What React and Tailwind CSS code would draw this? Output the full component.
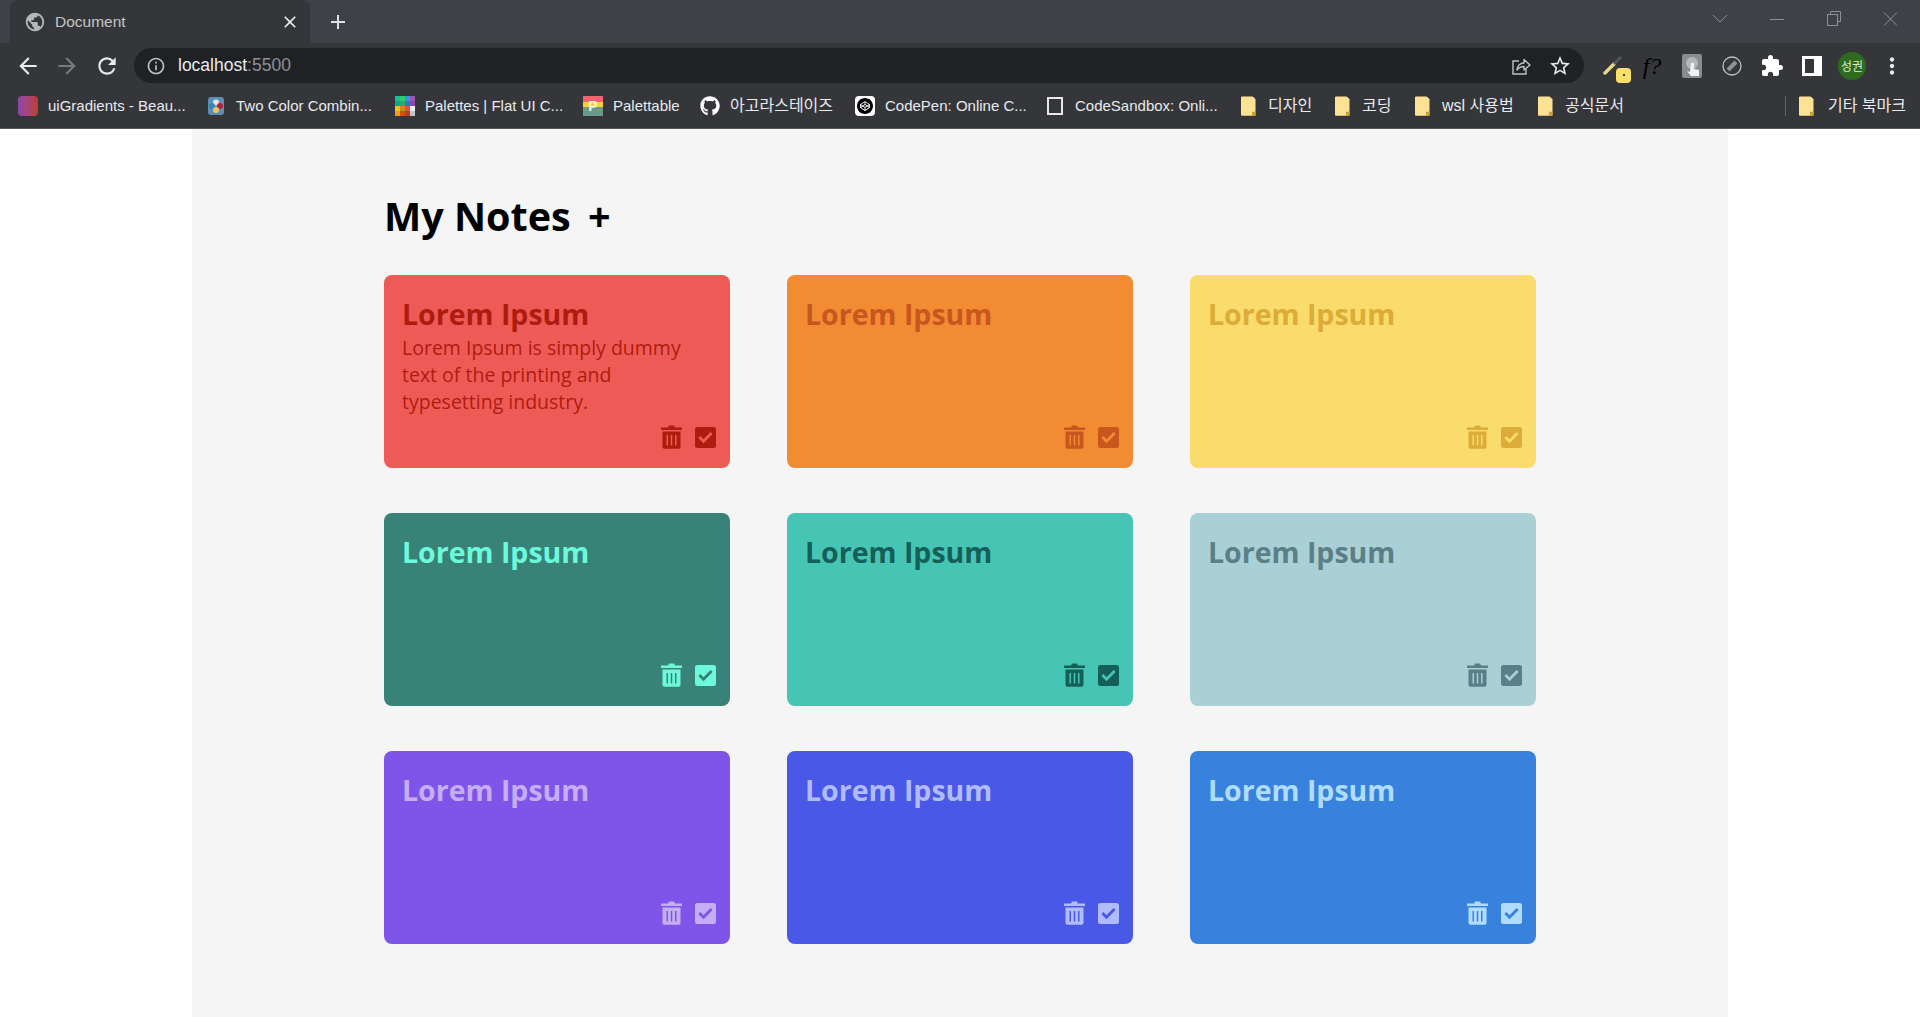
import React from 'react';
import { MdPublic, MdClose, MdAdd, MdArrowBack, MdArrowForward, MdRefresh, MdInfoOutline, MdStarBorder, MdExtension, MdMoreVert } from 'react-icons/md';
import { FaGithub } from 'react-icons/fa';
import { SiCodepen } from 'react-icons/si';

const notes = [
  { bg: 'bg-[#ee5b57]', fg: 'text-[#ae1c10]', body: true },
  { bg: 'bg-[#f28c33]', fg: 'text-[#c8561f]' },
  { bg: 'bg-[#f9dc6b]', fg: 'text-[#dcab38]' },
  { bg: 'bg-[#398277]', fg: 'text-[#6cf9dc]' },
  { bg: 'bg-[#46c5b5]', fg: 'text-[#155f59]' },
  { bg: 'bg-[#a9d0d5]', fg: 'text-[#5a7f86]' },
  { bg: 'bg-[#7e55e8]', fg: 'text-[#c5aef5]' },
  { bg: 'bg-[#4958e6]', fg: 'text-[#b1bcff]' },
  { bg: 'bg-[#3882dd]', fg: 'text-[#b0dcff]' },
];

const bookmarks = [
  { label: 'uiGradients - Beau...', w: 'w-[188px]', icon: <span className="w-5 h-5 rounded-sm bg-gradient-to-r from-[#8e44ad] to-[#c0392b]" /> },
  { label: 'Two Color Combin...', w: 'w-[189px]', icon: <TwoColorIcon /> },
  { label: 'Palettes | Flat UI C...', w: 'w-[188px]', icon: <PalettesIcon /> },
  { label: 'Palettable', w: 'w-[117px]', icon: <PalettableIcon /> },
  { label: '아고라스테이즈', w: 'w-[155px]', kr: true, icon: <FaGithub size={20} className="text-white" /> },
  { label: 'CodePen: Online C...', w: 'w-[190px]', icon: <span className="w-5 h-5 rounded-sm bg-white flex items-center justify-center"><SiCodepen size={16} className="text-black" /></span> },
  { label: 'CodeSandbox: Onli...', w: 'w-[193px]', icon: <span className="w-5 h-5 flex items-center justify-center"><span className="w-4 h-[18px] border-2 border-[#e8e8e8]" /></span> },
  { label: '디자인', w: 'w-[94px]', kr: true, folder: true },
  { label: '코딩', w: 'w-[80px]', kr: true, folder: true },
  { label: 'wsl 사용법', w: 'w-[123px]', kr: true, folder: true },
  { label: '공식문서', w: 'w-[100px]', kr: true, folder: true },
];

function TwoColorIcon() {
  return (
    <svg width="20" height="20" viewBox="0 0 20 20">
      <rect x="2" y="1" width="16" height="18" rx="3" fill="#5b8fb8" />
      <circle cx="10" cy="6.500" r="3" fill="#dfe6ea" />
      <circle cx="14" cy="10" r="3" fill="#b3223a" />
      <circle cx="6" cy="10" r="3" fill="#3a86a8" />
      <circle cx="10" cy="14" r="3" fill="#e8c766" />
    </svg>
  );
}

// flat ui palette, 4 by 4
const flatColors = [
  'bg-[#1abc9c]', 'bg-[#2ecc71]', 'bg-[#3498db]', 'bg-[#9b59b6]',
  'bg-[#16a085]', 'bg-[#27ae60]', 'bg-[#2980b9]', 'bg-[#8e44ad]',
  'bg-[#f1c40f]', 'bg-[#e67e22]', 'bg-[#e74c3c]', 'bg-[#ecf0f1]',
  'bg-[#f39c12]', 'bg-[#d35400]', 'bg-[#c0392b]', 'bg-[#bdc3c7]',
];

function PalettesIcon() {
  return (
    <span className="w-5 h-5 grid grid-cols-4 grid-rows-4">
      {flatColors.map((c) => <i key={c} className={c} />)}
    </span>
  );
}

function PalettableIcon() {
  return (
    <span className="relative w-5 h-5 flex flex-col">
      <i className="h-[6px] bg-[#f2646f]" />
      <i className="h-[5px] bg-[#f6d32d]" />
      <i className="h-[9px] bg-[#6a9a8a]" />
      <span className="absolute inset-0 flex items-center justify-center text-[14px] font-bold text-[#f4f1dc]">P</span>
    </span>
  );
}

function Folder() {
  return (
    <span className="w-5 h-5 flex items-center justify-center shrink-0">
      <svg width="15" height="20" viewBox="0 0 15 20">
        <path d="M0 1.500A1 1 0 0 1 1 .5h10.500L14.500 3v16a.8.8 0 0 1-.8.8H1a1 1 0 0 1-1-1z" fill="#fde293" />
        <path d="M11 19.800v-4h3.500v3.200a.8.8 0 0 1-.8.8z" fill="#c9a02c" />
      </svg>
    </span>
  );
}

function ShareIcon() {
  return (
    <svg width="20" height="20" viewBox="0 0 20 20" fill="none" stroke="#bdc1c6" strokeWidth="1.400">
      <path d="M8 5H2v13h13v-5" />
      <path d="M6 14c0-4 3-7 7-7V3.500L19 9l-6 5v-3.500c-3 0-5 1-7 3.500z" strokeLinejoin="round" />
    </svg>
  );
}

function WandIcon() {
  return (
    <span className="relative w-[40px] h-[30px] flex items-center justify-center">
      <svg width="22" height="22" viewBox="0 0 22 22" className="absolute left-[11px] top-[2px]">
        <path d="M2 20 L11 11" stroke="#e8d58a" strokeWidth="3.500" strokeLinecap="round" />
        <path d="M11 11 L18 4" stroke="#55585c" strokeWidth="2.500" />
      </svg>
      <span className="absolute left-[24px] top-[17px] w-[15px] h-[15px] rounded-sm bg-[#fde068] flex items-center justify-center">
        <span className="w-[2px] h-[2px] bg-[#333]" />
      </span>
    </span>
  );
}

function TileIcon() {
  return (
    <svg width="20" height="24" viewBox="0 0 20 24">
      <rect width="20" height="24" rx="2" fill="#8a8c8e" />
      <circle cx="10" cy="9" r="6" fill="#b5b7b9" />
      <path d="M9 9h3v6l5 1v6H9l-4-5 3 1z" fill="#f1f2f3" />
    </svg>
  );
}

function CompassIcon() {
  return (
    <svg width="20" height="20" viewBox="0 0 20 20">
      <circle cx="10" cy="10" r="9" fill="none" stroke="#bdc1c6" strokeWidth="1.300" />
      <path d="M6 14 L14 6" stroke="#8f9296" strokeWidth="4" />
    </svg>
  );
}

function RestoreIcon() {
  return (
    <svg width="14" height="15" viewBox="0 0 14 15" fill="none" stroke="#8d9094">
      <path d="M3.500 3.500V.5h10v10h-3" />
      <rect x=".5" y="3.500" width="10" height="11" />
    </svg>
  );
}

function TrashIcon() {
  return (
    <svg width="21" height="24" viewBox="0 0 21 24" fill="currentColor" className="block">
      <path d="M0 2.500h7L8 .5h5l1 2h7v2.500H0z" />
      <path fillRule="evenodd" d="M1.500 6.500h18V22a1.800 1.800 0 0 1-1.800 1.800H3.300A1.800 1.800 0 0 1 1.500 22zM5.500 10v10.500h1.500V10zM9.750 10v10.500h1.500V10zM14 10v10.500h1.500V10z" />
    </svg>
  );
}

function CheckIcon() {
  return (
    <svg width="21" height="21" viewBox="0 0 21 21" fill="currentColor" className="block">
      <path fillRule="evenodd" d="M2.500 0h16A2.500 2.500 0 0 1 21 2.500v16a2.500 2.500 0 0 1-2.500 2.500h-16A2.500 2.500 0 0 1 0 18.500v-16A2.500 2.500 0 0 1 2.500 0zm6 16.200L17.600 7.100l-2-2-7.100 7.100-3.100-3.100-2 2z" />
    </svg>
  );
}

function Note({ note }) {
  return (
    <div className={`${note.bg} ${note.fg} rounded-lg h-[193px] pl-[18px] pr-[14px] pt-[16px] pb-[19px] flex flex-col`}>
      <h3 className="text-[28.500px] font-bold leading-[46px]">Lorem Ipsum</h3>
      {note.body && (
        <p className="text-[19.500px] leading-[27px] w-[300px] -mt-[3px]">Lorem Ipsum is simply dummy text of the printing and typesetting industry.</p>
      )}
      <div className="mt-auto flex justify-end items-center gap-[13px]">
        <TrashIcon />
        <CheckIcon />
      </div>
    </div>
  );
}

function App() {
  return (
    <div className="min-h-screen flex flex-col bg-white font-['Open_Sans','Noto_Sans_CJK_KR',sans-serif]">
      {/* browser chrome */}
      <div className="h-[43px] bg-[#3e4246] flex items-stretch pl-[10px] text-[#dfe1e5]">
        <div className="w-[300px] bg-[#35363a] rounded-t-lg flex items-center pl-[14px] pr-[10px]">
          <MdPublic size={22} className="text-[#b4b7ba]" />
          <span className="ml-[9px] text-[15.500px] text-[#c4c7c5] font-['Liberation_Sans',sans-serif]">Document</span>
          <MdClose size={20} className="ml-auto text-[#e8eaed]" />
        </div>
        <span className="ml-[16px] flex items-center"><MdAdd size={24} /></span>
        <div className="ml-auto flex items-center pb-[6px] text-[#8d9094]">
          <svg width="58" height="12" viewBox="0 0 58 12" fill="none" stroke="#8d9094"><path d="M22 2l7 7 7-7" /></svg>
          <svg width="56" height="12" viewBox="0 0 56 12" fill="none" stroke="#8d9094"><path d="M21 6.500h14" /></svg>
          <span className="w-[57px] flex justify-center"><RestoreIcon /></span>
          <svg width="58" height="14" viewBox="0 0 58 14" fill="none" stroke="#8d9094"><path d="M22 .5l13 13M35 .5l-13 13" /></svg>
        </div>
      </div>
      <div className="h-[41px] bg-[#35363a] flex items-center pt-[4px] pl-[15px] pr-[8px] text-[#e8eaed]">
        <MdArrowBack size={26} />
        <MdArrowForward size={26} className="ml-[13px] text-[#75787c]" />
        <MdRefresh size={26} className="ml-[14px]" />
        <div className="ml-[14px] flex-1 h-[35px] rounded-full bg-[#202124] flex items-center pl-[12px] pr-[12px]">
          <MdInfoOutline size={20} className="text-[#bdc1c6]" />
          <span className="ml-[12px] text-[17.500px] font-['Liberation_Sans',sans-serif]">localhost<span className="text-[#8d9094]">:5500</span></span>
          <span className="ml-auto"><ShareIcon /></span>
          <MdStarBorder size={24} className="ml-[17px]" />
        </div>
        <div className="ml-[8px] flex items-center">
          <WandIcon />
          <span className="w-[40px] text-center font-['Liberation_Serif',serif] italic text-[24px] leading-none text-black">f?</span>
          <span className="w-[40px] flex justify-center"><TileIcon /></span>
          <span className="w-[40px] flex justify-center"><CompassIcon /></span>
          <span className="w-[40px] flex justify-center"><MdExtension size={24} className="text-white" /></span>
          <span className="w-[40px] flex justify-center"><span className="w-5 h-5 border-[3px] border-r-[8px] border-white" /></span>
          <span className="w-[40px] flex justify-center">
            <span className="w-[28px] h-[28px] rounded-full bg-[#2f6b1f] text-[12px] text-[#d8ecd0] flex items-center justify-center font-['Noto_Sans_CJK_KR',sans-serif]">성권</span>
          </span>
          <span className="w-[40px] flex justify-center"><MdMoreVert size={26} /></span>
        </div>
      </div>
      <div className="h-[45px] bg-[#35363a] flex items-center pl-[18px] pr-[14px] text-[15px] text-[#e8eaed] font-['Liberation_Sans','Noto_Sans_CJK_KR',sans-serif] border-b border-[#55575b]">
        {bookmarks.map((b) => (
          <div key={b.label} className={`${b.w} flex items-center gap-[10px] shrink-0`}>
            {b.folder ? <Folder /> : b.icon}
            <span className={`whitespace-nowrap ${b.kr ? 'text-[16px]' : ''}`}>{b.label}</span>
          </div>
        ))}
        <div className="ml-auto flex items-center gap-[11px]">
          <span className="w-px h-5 bg-[#5f6368]" />
          <Folder />
          <span className="text-[16px]">기타 북마크</span>
        </div>
      </div>

      {/* page */}
      <div className="flex-1 mx-auto w-[1536px] bg-[#f5f5f5] px-[192px] pt-[57px]">
        <h1 className="text-[39.500px] font-bold leading-[60px] text-black">My Notes <span className="ml-[7px]">+</span></h1>
        <div className="mt-[29px] grid grid-cols-3 gap-x-[57px] gap-y-[45px]">
          {notes.map((n, i) => <Note key={i} note={n} />)}
        </div>
      </div>
    </div>
  );
}

export default App;
